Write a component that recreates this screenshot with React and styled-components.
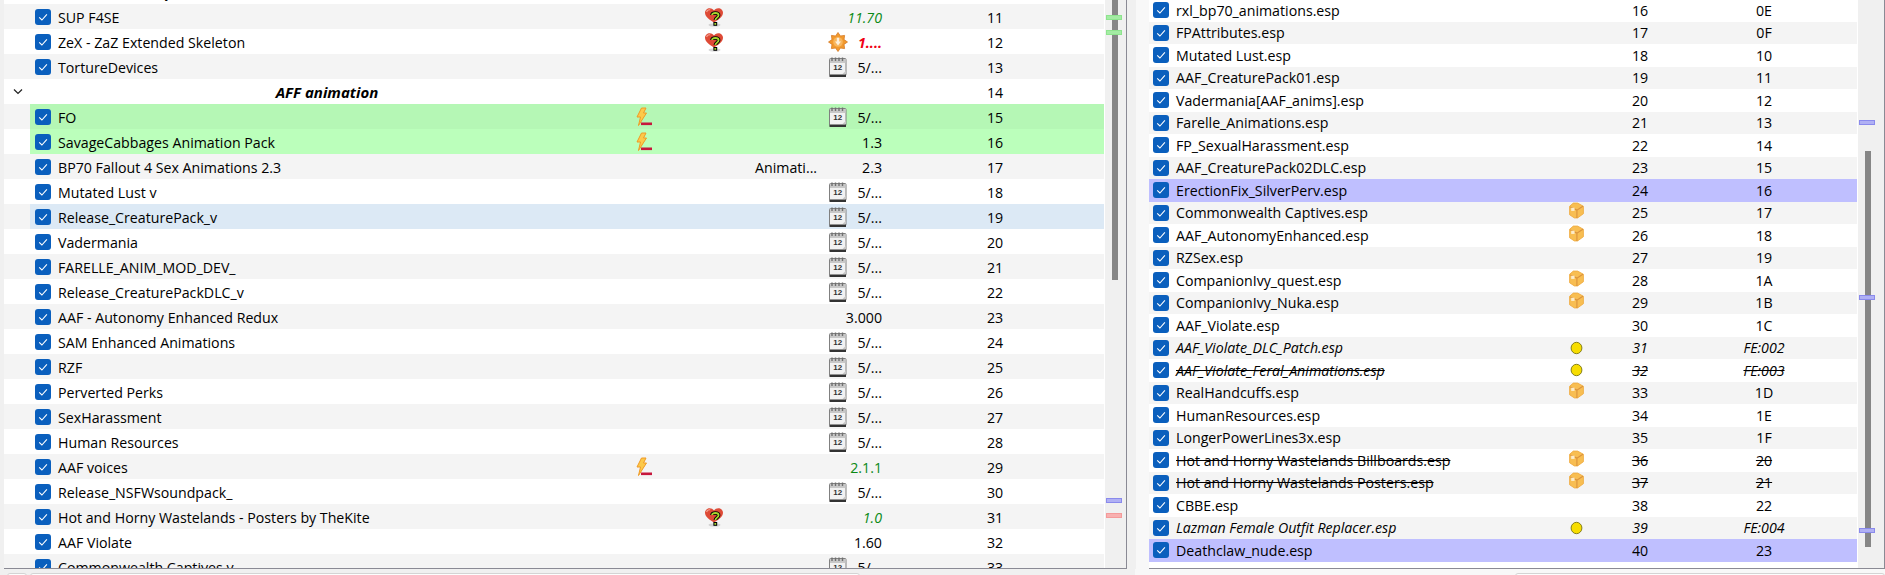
import React from "react";
import styled, { createGlobalStyle } from "styled-components";

const GlobalStyle = createGlobalStyle`
  html, body { margin: 0; padding: 0; background: #f0f0f0; }
  body { font-family: "Open Sans", "Noto Sans", sans-serif; font-size: 14.2px; color: #000; overflow: hidden; }
`;

const Page = styled.div`
  width: 1885px;
  height: 575px;
  overflow: hidden;
  display: flex;
  flex-direction: column;
  background: #f0f0f0;
`;

const Panes = styled.div`
  display: flex;
  height: 569px;
  padding-left: 4px;
  flex-shrink: 0;
`;

const Pane = styled.section`
  width: ${(p) => p.$width}px;
  display: flex;
  box-sizing: border-box;
  border-right: 1px solid #8a8a94;
  border-bottom: 1px solid #8a8a94;
  background: #fff;
`;

const Splitter = styled.div`
  width: 22px;
  flex-shrink: 0;
  box-sizing: border-box;
  border-right: 13px solid #f8f8f8;
  background: #f0f0f0;
`;

const List = styled.div`
  flex: 1;
  min-width: 0;
  overflow: hidden;
  margin-right: 1px;
`;

const ListInner = styled.div`
  margin-top: ${(p) => p.$offset}px;
`;

const Gutter = styled.div`
  width: ${(p) => p.$width}px;
  flex-shrink: 0;
  background: #f0f0f0;
  position: relative;
`;

const Thumb = styled.div`
  width: 6px;
  height: ${(p) => p.$height}px;
  margin-top: ${(p) => p.$top}px;
  margin-left: ${(p) => p.$left}px;
  background: #868686;
`;

const Marker = styled.div`
  position: absolute;
  left: 1px;
  width: 16px;
  height: 5px;
  box-sizing: border-box;
  top: ${(p) => p.$top}px;
  background: ${(p) => (p.$kind === "green" ? "#a4eca4" : p.$kind === "red" ? "#f8b0b0" : "#b0b0f4")};
  border: 1px solid ${(p) => (p.$kind === "green" ? "#8ee48e" : p.$kind === "red" ? "#f49a9a" : "#8a8aec")};
`;

const LeftRow = styled.div`
  display: grid;
  grid-template-columns: 26px 1fr;
  height: 25px;
  background: ${(p) => (p.$alt ? "#f4f4f4" : "#fff")};
`;

const Chevron = styled.div`
  display: flex;
  align-items: center;
  padding: 1px 0 0 9px;
`;

const LeftCells = styled.div`
  display: grid;
  grid-template-columns: 588px 50px 87px 69px 62px 1fr;
  align-items: center;
  padding-top: 1px;
  background: ${(p) => p.$bg || "transparent"};
`;

const NameCell = styled.div`
  display: flex;
  align-items: center;
  gap: 7px;
  padding-left: 5px;
  white-space: nowrap;
`;

const Check = styled.span`
  width: 16px;
  height: 16px;
  flex-shrink: 0;
  border-radius: 3px;
  background: #0a5fbd;
  display: flex;
  align-items: center;
  justify-content: center;
`;

const IconCell = styled.div`
  display: flex;
  justify-content: center;
  padding-left: ${(p) => p.$pad || 0}px;
  margin-top: ${(p) => p.$lift || 0}px;
`;

const Category = styled.div`
  white-space: nowrap;
`;

const VersionCell = styled.div`
  display: flex;
  align-items: center;
  justify-content: space-between;
  padding-left: 4px;
  padding-right: 4px;
`;

const Version = styled.span`
  margin-left: auto;
  white-space: nowrap;
  color: ${(p) => (p.$tone === "green" ? "#0a8a14" : p.$tone === "red" ? "#f00014" : "#000")};
  font-style: ${(p) => (p.$tone === "red" || p.$italic ? "italic" : "normal")};
  font-weight: ${(p) => (p.$tone === "red" ? 700 : 400)};
`;

const Centered = styled.div`
  text-align: center;
  grid-column: ${(p) => p.$col || "auto"};
`;

const GroupTitle = styled.div`
  grid-column: 1;
  text-align: center;
  font-size: 15px;
  font-weight: 700;
  font-style: italic;
  padding-left: 6px;
  padding-right: ${(p) => p.$shift || 0}px;
`;

const RightRow = styled.div`
  display: grid;
  grid-template-columns: 27px 380px 40px 88px 160px 1fr;
  align-items: center;
  height: 22.5px;
  background: ${(p) => (p.$marked ? "#bfbfff" : p.$alt ? "#f4f4f4" : "#fff")};
  font-style: ${(p) => (p.$italic ? "italic" : "normal")};
  text-decoration: ${(p) => (p.$struck ? "line-through" : "none")};
`;

const RightCheck = styled.div`
  padding-left: 4px;
  display: flex;
`;

const RightName = styled.div`
  white-space: nowrap;
`;

const Footer = styled.div`
  flex: 1;
  display: flex;
`;

const FooterLeft = styled.div`
  width: 1128px;
  display: flex;
  gap: 3px;
  padding: 4px 0 0 7px;
`;

const FooterRight = styled.div`
  flex: 1;
  display: flex;
  justify-content: flex-end;
  padding-top: 4px;
  background: #f8f8f8;
`;

const FooterBox = styled.div`
  width: ${(p) => p.$width}px;
  height: 12px;
  box-sizing: border-box;
  border: 1px solid #d4d4d4;
  border-radius: 3px;
  background: #fdfdfd;
`;

const CheckMark = () => (
  <svg width="10" height="10" viewBox="0 0 10 10" fill="none">
    <path d="M1.2 5.4 L3.9 8 L8.9 2.4" stroke="#fff" strokeWidth="1.1" />
  </svg>
);

const ChevronIcon = () => (
  <svg width="10" height="8" viewBox="0 0 10 8" fill="none">
    <path d="M1 1.5 L5 5.5 L9 1.5" stroke="#222" strokeWidth="1.2" />
  </svg>
);

const HeartIcon = () => (
  <svg width="20" height="20" viewBox="0 0 20 20">
    <ellipse cx="10.5" cy="18" rx="6" ry="1.6" fill="#bbb" opacity="0.6" />
    <path d="M10 15.5 C6 13 1 10 1 5.8 C1 3 3.4 1.2 5.6 1.2 C7.8 1.2 9.3 2.2 10 3.6 C10.7 2.2 12.2 1.2 14.4 1.2 C16.8 1.2 19 3 19 5.8 C19 10 14 13 10 15.5 Z" fill="#de4a36" />
    <path d="M2.6 5 C3 3.4 4.6 2.6 6.2 2.8" stroke="#f4a08e" strokeWidth="1.2" fill="none" />
    <path d="M8 8 C8 5.4 14.6 5.2 14.6 8.2 C14.6 10.6 11.4 10.6 11.4 13" stroke="#000" strokeWidth="3.6" fill="none" />
    <path d="M8 8 C8 5.4 14.6 5.2 14.6 8.2 C14.6 10.6 11.4 10.6 11.4 13" stroke="#a4d62e" strokeWidth="1.8" fill="none" />
    <rect x="9.4" y="15" width="3.8" height="3.8" fill="#000" />
    <rect x="10.4" y="16" width="1.8" height="1.8" fill="#a4d62e" />
  </svg>
);

const FlashIcon = () => (
  <svg width="18" height="20" viewBox="0 0 18 20">
    <path d="M7.5 1 L12 1 L9.5 6 L12.5 6 L4.5 18.5 L6.5 10 L3 10 Z" fill="#fcc94a" stroke="#f09a24" strokeWidth="1" />
    <rect x="7" y="15.5" width="11" height="2.6" fill="#c6173c" />
  </svg>
);

const SunIcon = () => (
  <svg width="20" height="20" viewBox="0 0 20 20">
    <path d="M10 0.5 L12.4 4 L16.6 3.4 L16 7.6 L19.5 10 L16 12.4 L16.6 16.6 L12.4 16 L10 19.5 L7.6 16 L3.4 16.6 L4 12.4 L0.5 10 L4 7.6 L3.4 3.4 L7.6 4 Z" fill="#f29a2e" stroke="#d67a24" strokeWidth="0.8" />
    <circle cx="10" cy="10" r="4.8" fill="#f8b65e" />
    <path d="M8.8 5.8 H11.2 V9.4 H13 L10 13.4 L7 9.4 H8.8 Z" fill="#fdf0dc" />
  </svg>
);

const CalendarIcon = () => (
  <svg width="20" height="21" viewBox="0 0 20 21">
    <rect x="1.5" y="1.5" width="16.5" height="17" rx="1" fill="#f2f2f2" stroke="#808080" />
    <rect x="2" y="2" width="15.5" height="4" fill="#c8c8c8" />
    <path d="M4 0.5 V4 M7.5 0.5 V4 M11 0.5 V4 M14.5 0.5 V4" stroke="#707070" strokeWidth="1.4" />
    <text x="9.7" y="13.4" textAnchor="middle" fontFamily="Liberation Sans, sans-serif" fontSize="8" fontWeight="700" fill="#333">12</text>
    <rect x="1.5" y="17.5" width="16.5" height="2.5" fill="#333" />
    <path d="M14.5 17 L18 13.5 V17 Z" fill="#c8c8c8" />
  </svg>
);

const PackageIcon = () => (
  <svg width="17" height="17" viewBox="0 0 16 16">
    <path d="M1.5 4 L5 1 L9 1 L14.5 4 L14.5 11 L9 15 L6 15 L1.5 12 Z" fill="#f8be52" stroke="#eeaa40" strokeWidth="0.8" />
    <path d="M2 4.6 L8.4 7.6 L14 4 M8.4 7.6 V15" stroke="#d9913c" strokeWidth="1" fill="none" />
    <rect x="3" y="5.4" width="3.2" height="3" fill="#fceccb" />
  </svg>
);

const DotIcon = () => (
  <svg width="14" height="14" viewBox="0 0 14 14">
    <ellipse cx="7.5" cy="7" rx="5.4" ry="5.7" fill="#f7dd00" stroke="#86801a" strokeWidth="1" />
  </svg>
);

const CheckBox = () => (
  <Check>
    <CheckMark />
  </Check>
);

const cal = "5/...";

const mods = [
  { n: 11, name: "SUP F4SE", conflict: true, version: "11.70", tone: "green", italic: true },
  { n: 12, name: "ZeX - ZaZ Extended Skeleton", conflict: true, sun: true, version: "1....", tone: "red" },
  { n: 13, name: "TortureDevices", date: true, version: cal },
  { n: 14, group: "AFF animation" },
  { n: 15, name: "FO", flash: true, date: true, version: cal, bg: "#b5f7b5" },
  { n: 16, name: "SavageCabbages Animation Pack", flash: true, version: "1.3", bg: "#bbffbb" },
  { n: 17, name: "BP70 Fallout 4 Sex Animations 2.3", category: "Animati...", version: "2.3" },
  { n: 18, name: "Mutated Lust v", date: true, version: cal },
  { n: 19, name: "Release_CreaturePack_v", date: true, version: cal, bg: "#dce9f5" },
  { n: 20, name: "Vadermania", date: true, version: cal },
  { n: 21, name: "FARELLE_ANIM_MOD_DEV_", date: true, version: cal },
  { n: 22, name: "Release_CreaturePackDLC_v", date: true, version: cal },
  { n: 23, name: "AAF - Autonomy Enhanced Redux", version: "3.000" },
  { n: 24, name: "SAM Enhanced Animations", date: true, version: cal },
  { n: 25, name: "RZF", date: true, version: cal },
  { n: 26, name: "Perverted Perks", date: true, version: cal },
  { n: 27, name: "SexHarassment", date: true, version: cal },
  { n: 28, name: "Human Resources", date: true, version: cal },
  { n: 29, name: "AAF voices", flash: true, version: "2.1.1", tone: "green" },
  { n: 30, name: "Release_NSFWsoundpack_", date: true, version: cal },
  { n: 31, name: "Hot and Horny Wastelands - Posters by TheKite", conflict: true, version: "1.0", tone: "green", italic: true },
  { n: 32, name: "AAF Violate", version: "1.60" },
  { n: 33, name: "Commonwealth Captives v", date: true, version: cal },
];

const plugins = [
  ["rxl_bp70_animations.esp", "0E"],
  ["FPAttributes.esp", "0F"],
  ["Mutated Lust.esp", "10"],
  ["AAF_CreaturePack01.esp", "11"],
  ["Vadermania[AAF_anims].esp", "12"],
  ["Farelle_Animations.esp", "13"],
  ["FP_SexualHarassment.esp", "14"],
  ["AAF_CreaturePack02DLC.esp", "15"],
  ["ErectionFix_SilverPerv.esp", "16", "marked"],
  ["Commonwealth Captives.esp", "17", "pkg"],
  ["AAF_AutonomyEnhanced.esp", "18", "pkg"],
  ["RZSex.esp", "19"],
  ["CompanionIvy_quest.esp", "1A", "pkg"],
  ["CompanionIvy_Nuka.esp", "1B", "pkg"],
  ["AAF_Violate.esp", "1C"],
  ["AAF_Violate_DLC_Patch.esp", "FE:002", "dot"],
  ["AAF_Violate_Feral_Animations.esp", "FE:003", "dot struck"],
  ["RealHandcuffs.esp", "1D", "pkg"],
  ["HumanResources.esp", "1E"],
  ["LongerPowerLines3x.esp", "1F"],
  ["Hot and Horny Wastelands Billboards.esp", "20", "pkg struck"],
  ["Hot and Horny Wastelands Posters.esp", "21", "pkg struck"],
  ["CBBE.esp", "22"],
  ["Lazman Female Outfit Replacer.esp", "FE:004", "dot"],
  ["Deathclaw_nude.esp", "23", "marked"],
];

function ModRow({ mod }) {
  const alt = mod.n % 2 === 1;
  if (mod.group) {
    return (
      <LeftRow $alt={alt}>
        <Chevron>
          <ChevronIcon />
        </Chevron>
        <LeftCells>
          <GroupTitle>{mod.group}</GroupTitle>
          <Centered $col={6}>{mod.n}</Centered>
        </LeftCells>
      </LeftRow>
    );
  }
  return (
    <LeftRow $alt={alt}>
      <span />
      <LeftCells $bg={mod.bg}>
        <NameCell>
          <CheckBox />
          {mod.name}
        </NameCell>
        <IconCell>{mod.flash && <FlashIcon />}</IconCell>
        <IconCell $pad={5}>{mod.conflict && <HeartIcon />}</IconCell>
        <Category>{mod.category}</Category>
        <VersionCell>
          {mod.date && <CalendarIcon />}
          {mod.sun && <SunIcon />}
          <Version $tone={mod.tone} $italic={mod.italic}>{mod.version}</Version>
        </VersionCell>
        <Centered>{mod.n}</Centered>
      </LeftCells>
    </LeftRow>
  );
}

function PluginRow({ plugin, index }) {
  const [name, id, flags = ""] = plugin;
  const n = index + 16;
  const dot = flags.includes("dot");
  const pkg = flags.includes("pkg");
  return (
    <RightRow $alt={n % 2 === 1} $marked={flags.includes("marked")} $italic={dot} $struck={flags.includes("struck")}>
      <RightCheck>
        <CheckBox />
      </RightCheck>
      <RightName>{name}</RightName>
      <IconCell $lift={pkg ? -4 : 0}>
        {pkg && <PackageIcon />}
        {dot && <DotIcon />}
      </IconCell>
      <Centered>{n}</Centered>
      <Centered>{id}</Centered>
    </RightRow>
  );
}

export default function App() {
  return (
    <Page>
      <GlobalStyle />
      <Panes>
        <Pane $width={1123}>
          <List>
            <ListInner $offset={-21}>
              <LeftRow>
                <span />
                <LeftCells>
                  <GroupTitle $shift={314}>p</GroupTitle>
                </LeftCells>
              </LeftRow>
              {mods.map((mod) => (
                <ModRow key={mod.n} mod={mod} />
              ))}
            </ListInner>
          </List>
          <Gutter $width={21}>
            <Thumb $left={7} $top={0} $height={280} />
            <Marker $kind="green" $top={15} />
            <Marker $kind="green" $top={30} />
            <Marker $kind="blue" $top={498} />
            <Marker $kind="red" $top={513} />
          </Gutter>
        </Pane>
        <Splitter />
        <Pane $width={736}>
          <List>
            <ListInner $offset={-1}>
              {plugins.map((plugin, i) => (
                <PluginRow key={plugin[0]} plugin={plugin} index={i} />
              ))}
            </ListInner>
          </List>
          <Gutter $width={26}>
            <Thumb $left={7} $top={151} $height={396} />
            <Marker $kind="blue" $top={120} />
            <Marker $kind="blue" $top={295} />
            <Marker $kind="blue" $top={528} />
          </Gutter>
        </Pane>
      </Panes>
      <Footer>
        <FooterLeft>
          <FooterBox $width={20} />
          <FooterBox $width={830} />
        </FooterLeft>
        <FooterRight>
          <FooterBox $width={370} />
        </FooterRight>
      </Footer>
    </Page>
  );
}
